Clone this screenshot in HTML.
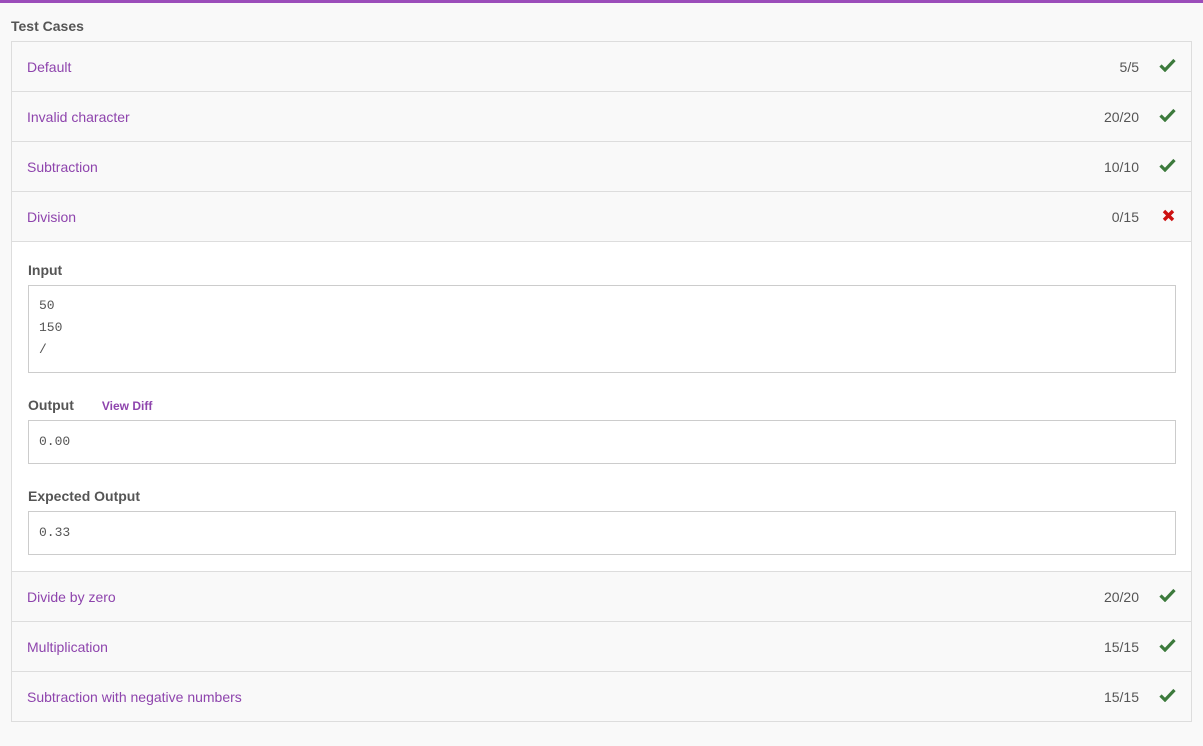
<!DOCTYPE html>
<html><head><style>
body{margin:0;background:#f9f9f9;font-family:"Liberation Sans",sans-serif;width:1203px;height:746px;overflow:hidden;position:relative}
.bar{position:absolute;left:0;top:0;width:1203px;height:3px;background:#9b4dba}
h3{position:absolute;left:11px;top:18px;margin:0;font-size:14px;font-weight:bold;color:#555}
.panel{position:absolute;left:11px;top:41px;width:1179px;border:1px solid #ddd;background:#f9f9f9}
.row{height:49px;border-bottom:1px solid #ddd;position:relative;font-size:14px}
.row:last-child{border-bottom:none}
.row .n{position:absolute;left:15px;top:17px;color:#8e44ad}
.row .s{position:absolute;right:52px;top:17px;color:#555}
.row svg{position:absolute;right:15px;top:16px}
.body{background:#fff;border-bottom:1px solid #ddd;height:329px;position:relative}
.lab{position:absolute;left:16px;font-size:14px;font-weight:bold;color:#555}
.box{position:absolute;left:16px;width:1148px;border:1px solid #ccc;background:#fff;font-family:"Liberation Mono",monospace;font-size:13px;color:#555;line-height:22px;padding:8px 10px;box-sizing:border-box}
.vd{color:#8e44ad;font-size:12px;margin-left:28px}
</style></head><body>
<div class="bar"></div>
<h3>Test Cases</h3>
<div class="panel">
<div class="row"><span class="n">Default</span><span class="s">5/5</span><svg width="17" height="14" viewBox="0 0 17 14"><path d="M1.5 7.5 L6 12 L15.5 2" fill="none" stroke="#3c7a3c" stroke-width="3.2"/></svg></div>
<div class="row"><span class="n">Invalid character</span><span class="s">20/20</span><svg width="17" height="14" viewBox="0 0 17 14"><path d="M1.5 7.5 L6 12 L15.5 2" fill="none" stroke="#3c7a3c" stroke-width="3.2"/></svg></div>
<div class="row"><span class="n">Subtraction</span><span class="s">10/10</span><svg width="17" height="14" viewBox="0 0 17 14"><path d="M1.5 7.5 L6 12 L15.5 2" fill="none" stroke="#3c7a3c" stroke-width="3.2"/></svg></div>
<div class="row"><span class="n">Division</span><span class="s">0/15</span><svg width="13" height="13" viewBox="0 0 13 13" style="right:16px;top:17px"><path d="M2 2 L11 11 M11 2 L2 11" stroke="#cc1111" stroke-width="3.4"/></svg></div>
<div class="body">
<div class="lab" style="top:20px">Input</div>
<div class="box" style="top:43px;height:88px;padding-top:9px">50<br>150<br>/</div>
<div class="lab" style="top:155px">Output<span class="vd">View Diff</span></div>
<div class="box" style="top:178px;height:44px;padding-top:10px">0.00</div>
<div class="lab" style="top:246px">Expected Output</div>
<div class="box" style="top:269px;height:44px;padding-top:10px">0.33</div>
</div>
<div class="row"><span class="n">Divide by zero</span><span class="s">20/20</span><svg width="17" height="14" viewBox="0 0 17 14"><path d="M1.5 7.5 L6 12 L15.5 2" fill="none" stroke="#3c7a3c" stroke-width="3.2"/></svg></div>
<div class="row"><span class="n">Multiplication</span><span class="s">15/15</span><svg width="17" height="14" viewBox="0 0 17 14"><path d="M1.5 7.5 L6 12 L15.5 2" fill="none" stroke="#3c7a3c" stroke-width="3.2"/></svg></div>
<div class="row"><span class="n">Subtraction with negative numbers</span><span class="s">15/15</span><svg width="17" height="14" viewBox="0 0 17 14"><path d="M1.5 7.5 L6 12 L15.5 2" fill="none" stroke="#3c7a3c" stroke-width="3.2"/></svg></div>
</div>
</body></html>
